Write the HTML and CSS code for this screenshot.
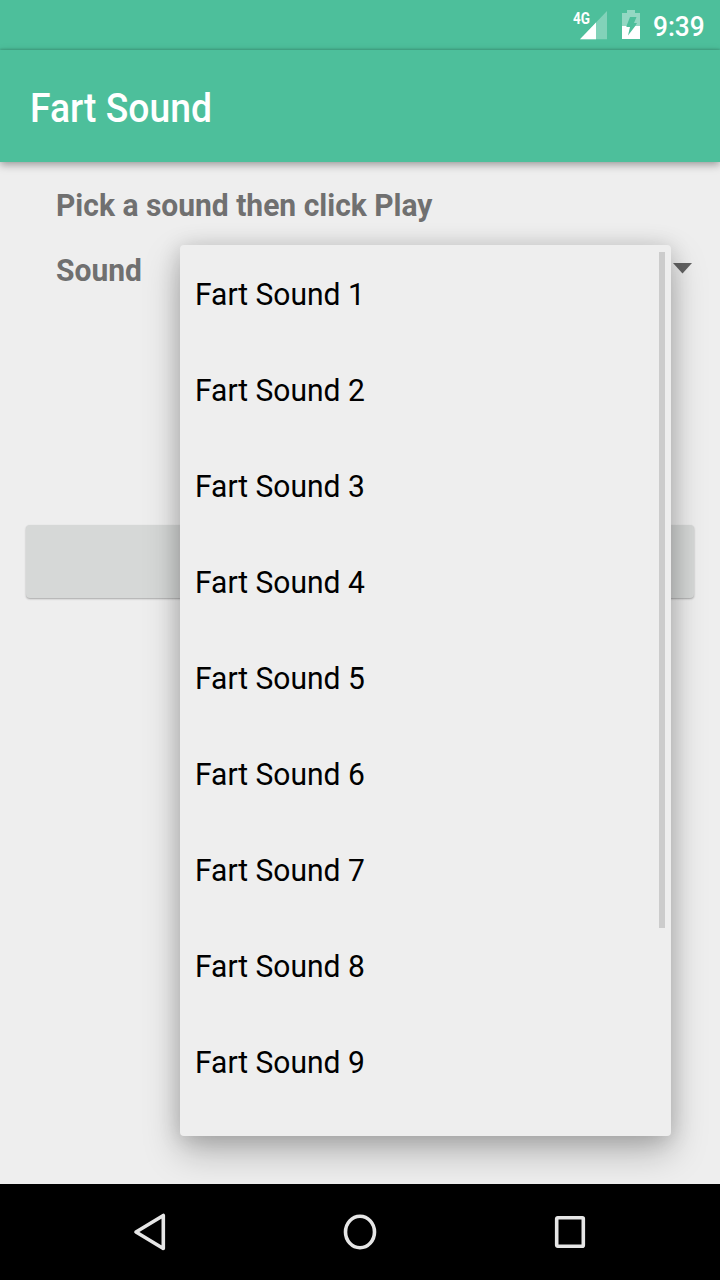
FILE: index.html
```html
<!DOCTYPE html>
<html lang="en">
<head>
  <meta charset="UTF-8">
  <title>Fart Sound</title>
  <link rel="stylesheet" href="styles.css">
</head>
<body>

<div class="status-bar">
  <svg class="signal" width="34" height="32" viewBox="0 0 34 32">
    <path d="M34 3V31.300H7z" fill="#fff" fill-opacity=".3"/>
    <path d="M23 14.500V31.300H7z" fill="#fff"/>
    <text class="network" x="0" y="15.700" textLength="17" lengthAdjust="spacingAndGlyphs">4G</text>
  </svg>
  <svg class="battery" width="18" height="29" viewBox="0 0 18 29">
    <path d="M0 3H5V0H13V3H18V16H13.300L15 13H12L14.500 7H8L4.500 16H0z" fill="#fff" fill-opacity=".4"/>
    <path d="M0 16H4.500V17H8L6 25.500L13.300 16H18V29H0z" fill="#fff"/>
  </svg>
  <span class="clock">9:39</span>
</div>

<header class="app-bar">
  <h1>Fart Sound</h1>
</header>

<main class="content">
  <p class="label">Pick a sound then click Play</p>
  <div class="sound-row">
    <span class="label">Sound</span>
    <svg class="arrow" width="20" height="11" viewBox="0 0 20 11">
      <path d="M0 0H19L9.500 10.500z" fill="#636363"/>
    </svg>
  </div>
  <button class="play"></button>

  <div class="dropdown">
    <ul>
      <li>Fart Sound 1</li>
      <li>Fart Sound 2</li>
      <li>Fart Sound 3</li>
      <li>Fart Sound 4</li>
      <li>Fart Sound 5</li>
      <li>Fart Sound 6</li>
      <li>Fart Sound 7</li>
      <li>Fart Sound 8</li>
      <li>Fart Sound 9</li>
    </ul>
    <div class="scrollbar"></div>
  </div>
</main>

<nav class="nav-bar">
  <svg width="36" height="40" viewBox="0 0 36 40">
    <path d="M4 20L31.300 3.500V36.500z"/>
  </svg>
  <svg width="36" height="40" viewBox="0 0 36 40">
    <ellipse cx="18" cy="20" rx="14.500" ry="15.700"/>
  </svg>
  <svg width="36" height="40" viewBox="0 0 36 40">
    <rect x="4.700" y="5.700" width="26.600" height="28.600" rx="1"/>
  </svg>
</nav>

</body>
</html>
```

FILE: styles.css
```css
* {
  box-sizing: border-box;
}

body {
  font-family: Roboto, sans-serif;
  background: #eee;
  margin: 0;
  height: 1280px;
  display: flex;
  flex-direction: column;
  overflow: hidden;
}

.status-bar {
  height: 50px;
  background: #4dbf9b;
  display: flex;
  justify-content: flex-end;
  align-items: flex-start;
  padding: 8px 16px 0 0;
  color: white;
}

.network {
  font-size: 16px;
  font-weight: bold;
  fill: white;
}

.battery {
  margin: 2px 13px 0 15px;
}

.clock {
  font-size: 28px;
  font-weight: 500;
  line-height: 37px;
  width: 51px;
  transform: scaleX(0.9375);
  transform-origin: left;
}

.app-bar {
  height: 112px;
  background: #4dbf9b;
  display: flex;
  align-items: center;
  padding: 4px 30px 0;
  box-shadow: 0 3px 8px rgba(0, 0, 0, 0.34), 0 -1px 2px rgba(0, 0, 0, 0.15);
}

h1 {
  color: white;
  font-size: 40px;
  font-weight: 500;
  margin: 0;
  transform: scaleX(0.932);
  transform-origin: left;
}

.content {
  position: relative;
  height: 1022px;
  padding: 24px 26px;
  overflow: hidden;
  z-index: -1;
}

.label {
  color: #707070;
  font-size: 32px;
  font-weight: bold;
  line-height: 38px;
  margin: 0 0 0 30px;
  transform: scaleX(0.9375);
  transform-origin: left;
}

.sound-row {
  display: flex;
  justify-content: space-between;
  margin-top: 27px;
}

.arrow {
  margin-top: 12px;
  margin-right: 1px;
}

.play {
  display: block;
  width: 668px;
  height: 73px;
  margin-top: 236px;
  border: none;
  border-radius: 4px;
  background: #d6d8d7;
  box-shadow: 0 1px 2px rgba(0, 0, 0, 0.3);
}

.dropdown {
  position: absolute;
  left: 180px;
  top: 83px;
  width: 491px;
  height: 891px;
  background: #eee;
  border-radius: 4px;
  box-shadow: 0 16px 36px rgba(0, 0, 0, 0.25), 0 2px 22px rgba(0, 0, 0, 0.16);
}

.dropdown ul {
  list-style: none;
  margin: 0;
  padding: 0 15px;
}

.dropdown li {
  height: 96px;
  font-size: 32px;
  line-height: 98px;
  color: black;
  transform: scaleX(0.9375);
  transform-origin: left;
}

.scrollbar {
  position: absolute;
  top: 7px;
  right: 6px;
  width: 6px;
  height: 676px;
  background: #ccc;
}

.nav-bar {
  height: 96px;
  background: black;
  display: flex;
  justify-content: center;
  align-items: center;
  gap: 174px;
}

.nav-bar svg {
  fill: none;
  stroke: #e6e6e6;
  stroke-width: 3.6;
  stroke-linejoin: round;
}
```
